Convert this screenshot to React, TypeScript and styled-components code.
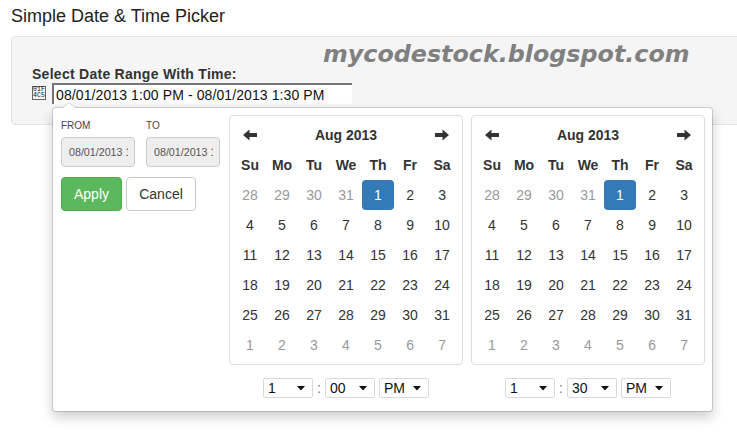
import React from "react";
import styled, { createGlobalStyle } from "styled-components";

const Global = createGlobalStyle`
  html, body { margin: 0; padding: 0; background: #fff; overflow: hidden; height: 437px; }
  body { font-family: "Liberation Sans", Arial, sans-serif; color: #333; font-size: 14px; }
`;
const Page = styled.div`
  width: 737px; height: 437px; overflow: hidden; padding: 6px 0 0 11px; box-sizing: border-box;
`;
const Title = styled.h1`
  margin: 0 0 10px; font-size: 18px; line-height: 20px; font-weight: 400; color: #222;
`;
const Panel = styled.section`
  width: 760px; height: 89px; box-sizing: border-box; background: #f5f5f5;
  border: 1px solid #e3e3e3; border-radius: 4px; padding: 0 0 0 20px;
`;
const Watermark = styled.div`
  height: 29px; padding: 2px 0 0 291px; box-sizing: border-box; font-family: "DejaVu Sans", Verdana, sans-serif;
  font-size: 23.8px; line-height: 30px; font-weight: 700; font-style: italic; color: #808080; white-space: nowrap;
`;
const FieldLabel = styled.label`
  display: block; font-weight: 700; font-size: 14px; line-height: 16px; letter-spacing: .27px; color: #333;
`;
const FieldRow = styled.div`
  display: flex; align-items: flex-start; gap: 6px; margin-top: 1px; position: relative;
`;
const Tofu = styled.span`
  width: 14px; height: 14px; margin-top: 3px; box-sizing: border-box; border: 1px solid #666; flex: none;
  display: grid; grid-template-columns: repeat(3, 4px); align-content: center; justify-content: center; justify-items: center;
  font-family: "Liberation Mono", monospace; font-size: 6.5px; line-height: 6px; color: #111; background: #f5f5f5;
`;
const RangeInput = styled.input`
  width: 300px; height: 21px; box-sizing: border-box; padding: 1px 2px; margin: 0;
  border-width: 2px 0 0 2px; border-style: solid; border-color: #767676; background: #fff;
  font: 14px/17px "Liberation Sans", Arial, sans-serif; letter-spacing: .1px; color: #111; border-radius: 0; outline: none;
`;
const Dropdown = styled.div`
  position: absolute; left: 20px; top: 24px; width: 661px; height: 305px; box-sizing: border-box;
  background: #fff; border: 1px solid rgba(0,0,0,.15); border-radius: 4px; background-clip: padding-box;
  box-shadow: 0 6px 12px rgba(0,0,0,.175); display: flex; padding: 7px 7px 0 8px;
  &::before { content: ""; position: absolute; left: 9px; top: -6px; border-left: 7px solid transparent; border-right: 7px solid transparent; border-bottom: 6px solid #ccc; }
  &::after { content: ""; position: absolute; left: 10px; top: -5px; border-left: 6px solid transparent; border-right: 6px solid transparent; border-bottom: 5px solid #fff; }
`;
const Ranges = styled.div`
  width: 168px; flex: none; padding-top: 5px; box-sizing: border-box;
`;
const InputsRow = styled.div`
  display: flex; gap: 11px;
`;
const Col = styled.div`
  width: 74px;
`;
const SmallLabel = styled.label`
  display: block; font-size: 10px; line-height: 11px; margin-bottom: 6px; color: #444; text-transform: uppercase;
`;
const DateInput = styled.input`
  width: 74px; height: 30px; box-sizing: border-box; padding: 0 6px 0 7px; margin: 0; background: #eee;
  border: 1px solid #ccc; border-radius: 4px; font: 10.7px "Liberation Sans", Arial, sans-serif; color: #555;
`;
const Buttons = styled.div`
  display: flex; gap: 4px; margin-top: 10px;
`;
const Btn = styled.button<{ $primary?: boolean }>`
  height: 34px; box-sizing: border-box; padding: 0 12px; border-radius: 4px; font: 14px "Liberation Sans", Arial, sans-serif;
  width: ${p => (p.$primary ? "61px" : "70px")};
  background: ${p => (p.$primary ? "#5cb85c" : "#fff")}; color: ${p => (p.$primary ? "#fff" : "#333")};
  border: 1px solid ${p => (p.$primary ? "#4cae4c" : "#ccc")};
`;
const CalendarCol = styled.div`
  width: 234px; flex: none; margin-right: 8px; &:last-child { margin-right: 0; }
`;
const CalBox = styled.div`
  width: 234px; height: 250px; box-sizing: border-box; border: 1px solid #ddd; border-radius: 4px; padding: 4px;
`;
const Table = styled.table`
  border-collapse: collapse; border-spacing: 0; table-layout: fixed; width: 224px;
`;
const ColDef = styled.col`
  width: 32px;
`;
const Cell = styled.td<{ $off?: boolean; $active?: boolean }>`
  height: 30px; padding: 0; text-align: center; font-size: 14px; border-radius: 4px;
  color: ${p => (p.$active ? "#fff" : p.$off ? "#999" : "#333")};
  background: ${p => (p.$active ? "#337ab7" : "transparent")};
`;
const Head = styled.th`
  height: 30px; padding: 0; text-align: center; font-size: 14px; font-weight: 700; color: #333;
`;
const Arrow = styled.svg<{ $flip?: boolean }>`
  display: block; margin: 0 auto; width: 16px; height: 14px;
  transform: ${p => (p.$flip ? "scaleX(-1)" : "none")};
`;
const TimeRow = styled.div`
  display: flex; justify-content: center; align-items: center; margin-top: 13px; height: 20px; color: #777; font-size: 14px;
`;
const Colon = styled.span`
  width: 12px; text-align: center;
`;
const arrowBg = `url("data:image/svg+xml,%3Csvg xmlns='http://www.w3.org/2000/svg' width='8' height='5'%3E%3Cpath d='M0 0h8L4 4.5z' fill='%23111'/%3E%3C/svg%3E")`;
const TimeSelect = styled.select<{ $gap?: boolean }>`
  appearance: none; width: 50px; height: 20px; box-sizing: border-box; margin: 0 0 0 ${p => (p.$gap ? "4px" : "0")};
  padding: 0 0 0 4px; border: 1px solid #d9d9d9; border-radius: 2px; color: #111;
  font: 14px "Liberation Sans", Arial, sans-serif; background: #fff ${arrowBg} no-repeat right 7px center;
`;

const rows = [
  [28, 29, 30, 31, 1, 2, 3], [4, 5, 6, 7, 8, 9, 10], [11, 12, 13, 14, 15, 16, 17],
  [18, 19, 20, 21, 22, 23, 24], [25, 26, 27, 28, 29, 30, 31], [1, 2, 3, 4, 5, 6, 7],
];
const days = ["Su", "Mo", "Tu", "We", "Th", "Fr", "Sa"];

const ArrowIcon = ({ flip }: { flip?: boolean }) => (
  <Arrow viewBox="0 0 16 14" $flip={flip}>
    <path d="M1 7 7.5 1.5v3.5H15v4H7.5v3.5z" fill="#333" />
  </Arrow>
);

const Calendar = ({ minutes }: { minutes: string }) => (
  <CalendarCol>
    <CalBox>
      <Table>
        <colgroup>{days.map(d => <ColDef key={d} />)}</colgroup>
        <thead>
          <tr>
            <Head><ArrowIcon /></Head>
            <Head colSpan={5}>Aug 2013</Head>
            <Head><ArrowIcon flip /></Head>
          </tr>
          <tr>{days.map(d => <Head key={d}>{d}</Head>)}</tr>
        </thead>
        <tbody>
          {rows.map((r, i) => (
            <tr key={i}>
              {r.map((n, j) => {
                const off = (i === 0 && j < 4) || i === 5;
                return <Cell key={j} $off={off} $active={i === 0 && j === 4}>{n}</Cell>;
              })}
            </tr>
          ))}
        </tbody>
      </Table>
    </CalBox>
    <TimeRow>
      <TimeSelect defaultValue="1"><option>1</option></TimeSelect>
      <Colon>:</Colon>
      <TimeSelect defaultValue={minutes}><option>{minutes}</option></TimeSelect>
      <TimeSelect $gap defaultValue="PM"><option>PM</option></TimeSelect>
    </TimeRow>
  </CalendarCol>
);

export default function App() {
  return (
    <Page>
      <Global />
      <Title>Simple Date &amp; Time Picker</Title>
      <Panel>
        <Watermark>mycodestock.blogspot.com</Watermark>
        <FieldLabel>Select Date Range With Time:</FieldLabel>
        <FieldRow>
          <Tofu>{["0", "1", "F", "4", "C", "5"].map((c, i) => <span key={i}>{c}</span>)}</Tofu>
          <RangeInput readOnly value="08/01/2013 1:00 PM - 08/01/2013 1:30 PM" />
          <Dropdown>
            <Ranges>
              <InputsRow>
                <Col>
                  <SmallLabel>From</SmallLabel>
                  <DateInput disabled value="08/01/2013 1:00 PM" />
                </Col>
                <Col>
                  <SmallLabel>To</SmallLabel>
                  <DateInput disabled value="08/01/2013 1:30 PM" />
                </Col>
              </InputsRow>
              <Buttons>
                <Btn $primary>Apply</Btn>
                <Btn>Cancel</Btn>
              </Buttons>
            </Ranges>
            <Calendar minutes="00" />
            <Calendar minutes="30" />
          </Dropdown>
        </FieldRow>
      </Panel>
    </Page>
  );
}
